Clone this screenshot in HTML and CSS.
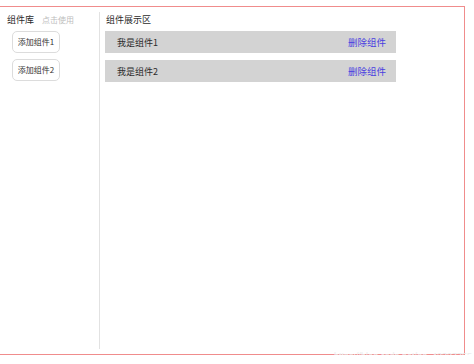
FILE: index.html
```html
<!DOCTYPE html>
<html lang="zh">
<head>
<meta charset="utf-8">
<link rel="stylesheet" href="styles.css">
</head>
<body>
<div class="frame">
  <aside class="library">
    <div class="lib-title">组件库<span class="hint">点击使用</span></div>
    <button class="add-btn">添加组件1</button>
    <button class="add-btn">添加组件2</button>
  </aside>
  <main class="stage">
    <div class="stage-title">组件展示区</div>
    <div class="item"><span>我是组件1</span><a class="del">删除组件</a></div>
    <div class="item"><span>我是组件2</span><a class="del">删除组件</a></div>
  </main>
  <div class="watermark">https://blog.csdn.net/qq_42327755</div>
</div>
</body>
</html>
```
FILE: styles.css
```css
html, body {
  margin: 0;
  padding: 0;
  background: #fff;
}
body {
  font-family: "Noto Sans CJK SC", "Liberation Sans", sans-serif;
  color: #2b2b2b;
}
.frame {
  position: relative;
  box-sizing: border-box;
  margin: 6px 0 0 -10px;
  width: 475px;
  height: 349px;
  border: 1px solid #f08c8c;
  display: flex;
  padding: 5px 0 5px 0;
}
.library {
  width: 109px;
  flex: none;
  border-right: 1px solid #e2e2e2;
  padding-left: 16px;
  box-sizing: border-box;
  display: flex;
  flex-direction: column;
  align-items: flex-start;
}
.lib-title {
  font-size: 9px;
  line-height: 16px;
  height: 16px;
  margin-bottom: 3px;
  white-space: nowrap;
}
.hint {
  font-size: 8px;
  color: #bdbdbd;
  margin-left: 8px;
}
.add-btn {
  font-family: inherit;
  font-size: 8px;
  color: #333;
  background: #fff;
  border: 1px solid #dcdcdc;
  border-radius: 5px;
  width: 48px;
  height: 22px;
  padding: 0;
  margin: 0 0 6px 5px;
  line-height: 20px;
}
.stage {
  flex: 1;
  padding-left: 5px;
  display: flex;
  flex-direction: column;
  align-items: flex-start;
}
.stage-title {
  font-size: 9px;
  line-height: 16px;
  height: 16px;
  margin: 0 0 3px 1px;
}
.item {
  width: 291px;
  height: 22px;
  background: #d3d3d3;
  display: flex;
  align-items: center;
  justify-content: space-between;
  padding: 0 10px 0 12px;
  box-sizing: border-box;
  font-size: 9px;
  margin-bottom: 7px;
}
.del {
  color: #4a3fe0;
  font-size: 9.5px;
  cursor: pointer;
}
.watermark {
  position: absolute;
  right: -8px;
  bottom: -7px;
  font-size: 9px;
  color: #ececec;
  font-family: "Liberation Sans", sans-serif;
}
```
